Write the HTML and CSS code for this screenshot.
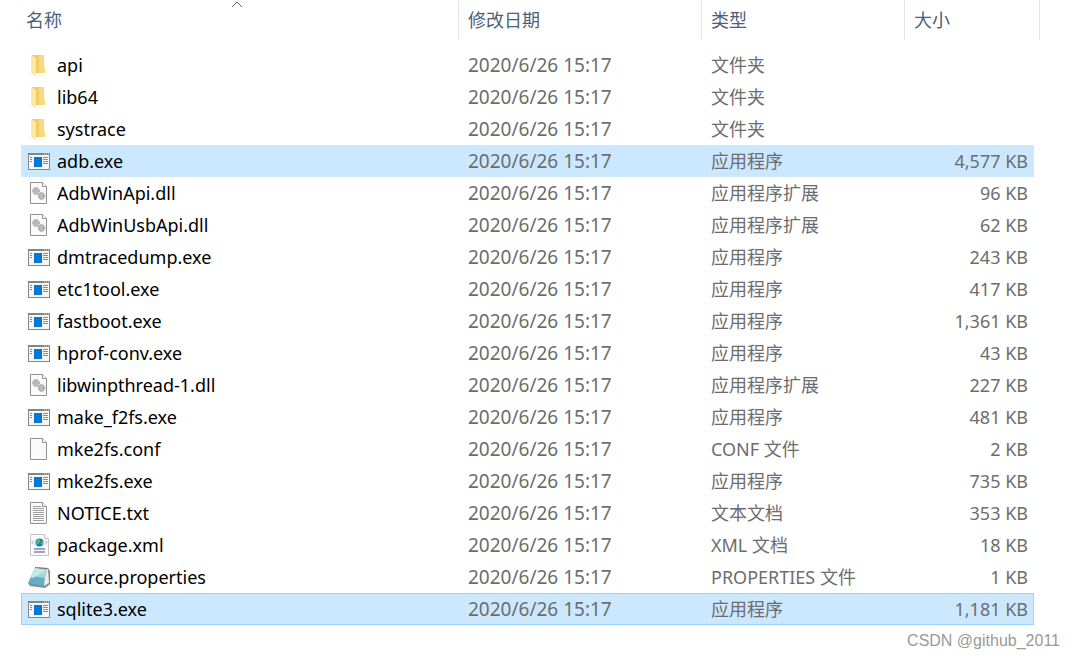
FILE: index.html
```html
<!DOCTYPE html>
<html lang="zh-CN">
<head>
  <meta charset="UTF-8">
  <meta name="viewport" content="width=device-width, initial-scale=1.0">
  <title>platform-tools</title>
  <link rel="stylesheet" href="styles.css">
</head>
<body>

  <!-- 图标 -->
  <svg class="sprite" aria-hidden="true">
    <symbol id="folder" viewBox="0 0 24 24">
      <path d="M6 2h11v11l1 2v5H9z" fill="#f9d978"/>
      <path d="M5 2h7v18h-3z" fill="#f1cc6c"/>
      <path d="M4 2l5 3v18l-5-3z" fill="#ffe8a2"/>
    </symbol>
    <symbol id="exe" viewBox="0 0 24 24">
      <path d="M1 4h22v17H1z" fill="#858585"/>
      <path d="M2 6h20v14H2z" fill="#f7f7f7"/>
      <path d="M17 5h1M19 5h1M21 5h1" stroke="#ddd"/>
      <path d="M7 8h8v10H7z" fill="#0078d7"/>
      <path d="M3 8.500h2M3 10.500h2M3 12.500h2M16 8.500h5M16 10.500h5M16 12.500h5M16 14.500h5" stroke="#8c8c8c"/>
    </symbol>
    <symbol id="page" viewBox="0 0 24 24">
      <path d="M3.500 1.500h12l4 4v17h-16z" fill="#fafafa" stroke="#929292"/>
      <path d="M15.500 1.500v4h4" fill="#fff" stroke="#929292"/>
    </symbol>
    <symbol id="dll" viewBox="0 0 24 24">
      <use href="#page"/>
      <g fill="#e4e4e4" stroke="#999">
        <circle cx="9" cy="10" r="3.500" stroke-dasharray="1 1"/>
        <circle cx="9" cy="10" r="2.500"/>
        <circle cx="9" cy="10" r="1" fill="#fff"/>
        <circle cx="14.500" cy="15" r="3.500" stroke-dasharray="1 1"/>
        <circle cx="14.500" cy="15" r="2.500"/>
        <circle cx="14.500" cy="15" r="1" fill="#fff"/>
      </g>
    </symbol>
    <symbol id="txt" viewBox="0 0 24 24">
      <use href="#page"/>
      <path d="M6 5.500h8M6 7.500h11M6 9.500h11M6 11.500h11M6 13.500h11M6 15.500h11M6 17.500h11M6 19.500h11" stroke="#a0a0a0"/>
    </symbol>
    <symbol id="xml" viewBox="0 0 24 24">
      <path d="M3.500 1.500h14l4 4v17h-18z" fill="#fafafa" stroke="#c4c4c4"/>
      <path d="M17.500 1.500v4h4" fill="#fff" stroke="#c4c4c4"/>
      <circle cx="12.500" cy="9.500" r="4" fill="#1b76bd"/>
      <path d="M9.500 7l3-1 1 2-2 3-2 1zM14.500 8l2 1-1 3-2-1z" fill="#56bd5b"/>
      <path d="M7 7.500l-2 2 2 2M18 7.500l2 2-2 2" fill="none" stroke="#8ba9c4"/>
      <path d="M7 16h11M7 19h11" stroke="#8583a8" stroke-width="1.500"/>
    </symbol>
    <symbol id="notepad" viewBox="0 0 24 24">
      <path d="M8 2l13 1 2 3v13l-4 3z" fill="#8b8474"/>
      <path d="M1 18l2 3 15 2 5-4-6-2z" fill="#77939c"/>
      <path d="M18 5l3-1 1 14-5 3z" fill="#f0eee4"/>
      <path d="M8 3l12 2-4 16-15-3z" fill="#65aec3"/>
      <path d="M8 3l12 2-2 8-13-2z" fill="#a4d6df"/>
      <path d="M8 3l12 2-14 8-2-1z" fill="#c3e7eb"/>
      <path d="M8 2.500l12 1" stroke="#677f89" stroke-dasharray="1 1"/>
    </symbol>
  </svg>

  <table class="file-list">
    <colgroup>
      <col class="col-name">
      <col class="col-date">
      <col class="col-type">
      <col class="col-size">
      <col class="col-end">
    </colgroup>
    <thead>
      <tr>
        <th aria-sort="ascending">
          <svg class="sort-arrow" viewBox="0 0 12 8" aria-hidden="true"><path d="M1 7l5-5 5 5"/></svg>
          <button type="button">名称</button>
        </th>
        <th><button type="button">修改日期</button></th>
        <th><button type="button">类型</button></th>
        <th colspan="2"><button type="button">大小</button></th>
      </tr>
    </thead>
    <tbody id="files"></tbody>
  </table>

  <div class="watermark">CSDN @github_2011</div>

  <script src="files.js"></script>
</body>
</html>
```
FILE: styles.css
```css
body {
  margin: 0;
  padding: 0 35px 0 21px;
  background: #fff;
  color: #000;
  font-family: "Noto Sans", "Noto Sans CJK SC", sans-serif;
  font-size: 18px;
}
.sprite {
  display: none;
}
.file-list {
  width: 100%;
  table-layout: fixed;
  border-collapse: separate;
  border-spacing: 0;
}
.col-date {
  width: 243px;
}
.col-type {
  width: 203px;
}
.col-size {
  width: 129px;
}
.col-end {
  width: 6px;
}
th {
  position: relative;
  height: 40px;
  padding: 0;
  border-right: 1px solid #e5e5e5;
  font-weight: normal;
  text-align: left;
}
th button {
  display: block;
  width: 100%;
  padding: 0 9px;
  border: none;
  background: none;
  color: #4c607a;
  font: inherit;
  line-height: 40px;
  text-align: left;
  cursor: pointer;
}
th:first-child button {
  padding: 0 5px;
}
.sort-arrow {
  position: absolute;
  top: 0;
  left: 210px;
  width: 12px;
  height: 8px;
  fill: none;
  stroke: #666;
}
/* 表头和列表之间的空隙 */
tbody::before {
  content: "";
  display: table-row;
  height: 9px;
}
td {
  height: 32px;
  padding: 0 9px;
  color: #6d6d6d;
  line-height: 32px;
  white-space: nowrap;
}
td.name {
  padding: 0 6px;
  color: #000;
}
.name-box {
  display: flex;
  align-items: center;
  gap: 6px;
}
.icon {
  width: 24px;
  height: 24px;
}
td.date {
  font-size: 19px;
}
td.size {
  padding: 0 6px;
  text-align: right;
}
tr.selected td {
  background: #cce8ff;
}
tr.focused td {
  box-shadow: inset 0 1px #99d1ff, inset 0 -1px #99d1ff;
}
tr.focused td.name {
  box-shadow: inset 0 1px #99d1ff, inset 0 -1px #99d1ff, inset 1px 0 #99d1ff;
}
tr.focused td.size {
  box-shadow: inset 0 1px #99d1ff, inset 0 -1px #99d1ff, inset -1px 0 #99d1ff;
}
.watermark {
  margin-right: -20px;
  color: #999;
  font-family: "Liberation Sans", sans-serif;
  font-size: 16px;
  line-height: 32px;
  text-align: right;
}
```
FILE: files.js
```js
const date = '2020/6/26 15:17';

// 图标, 文件名, 类型, 大小, 样式
const files = [
  ['folder', 'api', '文件夹', ''],
  ['folder', 'lib64', '文件夹', ''],
  ['folder', 'systrace', '文件夹', ''],
  ['exe', 'adb.exe', '应用程序', '4,577 KB', 'selected'],
  ['dll', 'AdbWinApi.dll', '应用程序扩展', '96 KB'],
  ['dll', 'AdbWinUsbApi.dll', '应用程序扩展', '62 KB'],
  ['exe', 'dmtracedump.exe', '应用程序', '243 KB'],
  ['exe', 'etc1tool.exe', '应用程序', '417 KB'],
  ['exe', 'fastboot.exe', '应用程序', '1,361 KB'],
  ['exe', 'hprof-conv.exe', '应用程序', '43 KB'],
  ['dll', 'libwinpthread-1.dll', '应用程序扩展', '227 KB'],
  ['exe', 'make_f2fs.exe', '应用程序', '481 KB'],
  ['page', 'mke2fs.conf', 'CONF 文件', '2 KB'],
  ['exe', 'mke2fs.exe', '应用程序', '735 KB'],
  ['txt', 'NOTICE.txt', '文本文档', '353 KB'],
  ['xml', 'package.xml', 'XML 文档', '18 KB'],
  ['notepad', 'source.properties', 'PROPERTIES 文件', '1 KB'],
  ['exe', 'sqlite3.exe', '应用程序', '1,181 KB', 'selected focused']
];

document.getElementById('files').innerHTML = files.map(([icon, name, type, size, state = '']) => `
  <tr class="${state}">
    <td class="name"><div class="name-box"><svg class="icon" aria-hidden="true"><use href="#${icon}"/></svg>${name}</div></td>
    <td class="date">${date}</td>
    <td class="type">${type}</td>
    <td class="size">${size}</td>
  </tr>
`).join('');
```
